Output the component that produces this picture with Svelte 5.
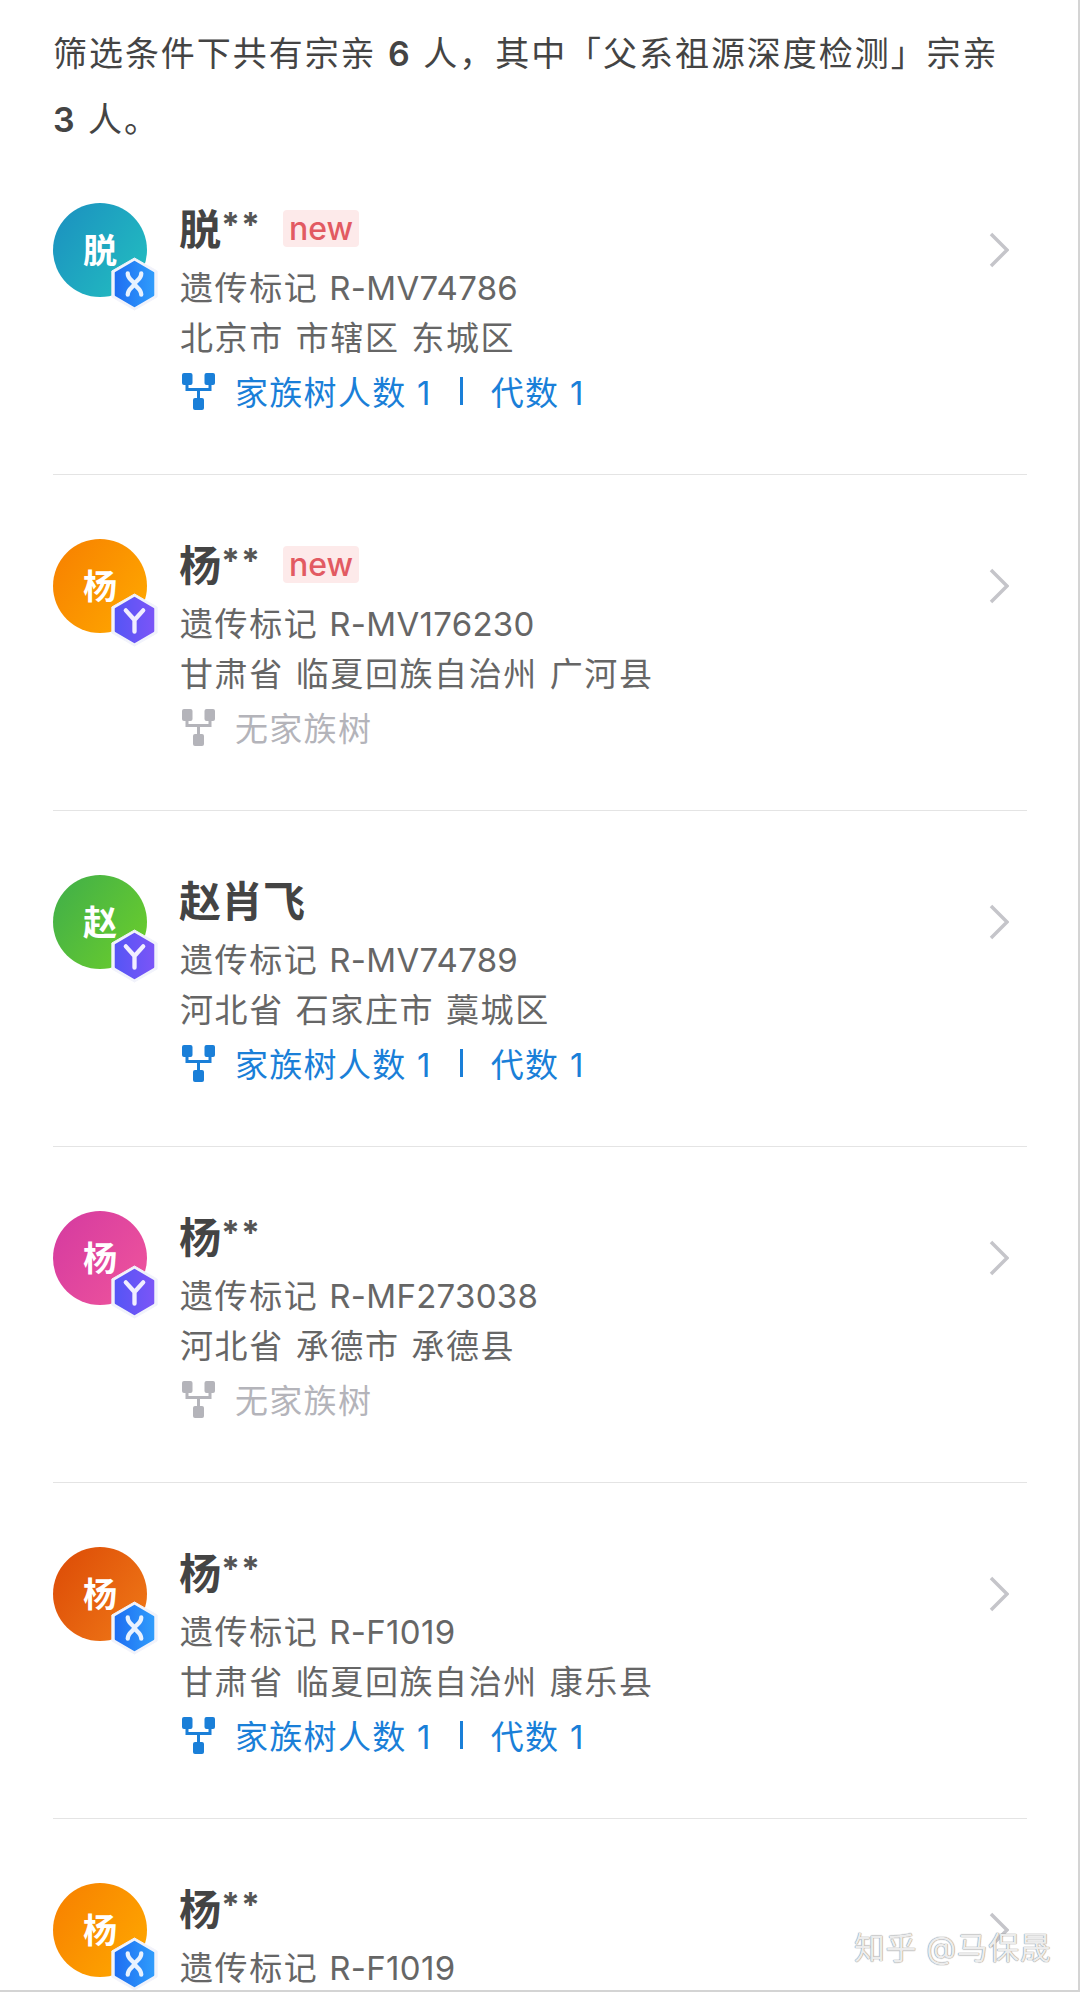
<script lang="ts">
  const rows = [
    { name: '脱', stars: true, isNew: true, tone: 'teal', hap: 'x', mark: 'R-MV74786', place: '北京市 市辖区 东城区', tree: true },
    { name: '杨', stars: true, isNew: true, tone: 'orange', hap: 'y', mark: 'R-MV176230', place: '甘肃省 临夏回族自治州 广河县', tree: false },
    { name: '赵肖飞', stars: false, isNew: false, tone: 'green', hap: 'y', mark: 'R-MV74789', place: '河北省 石家庄市 藁城区', tree: true },
    { name: '杨', stars: true, isNew: false, tone: 'pink', hap: 'y', mark: 'R-MF273038', place: '河北省 承德市 承德县', tree: false },
    { name: '杨', stars: true, isNew: false, tone: 'red', hap: 'x', mark: 'R-F1019', place: '甘肃省 临夏回族自治州 康乐县', tree: true },
    { name: '杨', stars: true, isNew: false, tone: 'orange', hap: 'x', mark: 'R-F1019', place: '', tree: null }
  ]
</script>

<main class="page">
  <svg class="defs" width="0" height="0" aria-hidden="true">
    <defs>
      <linearGradient id="hap-x" x1="0" y1="0" x2="1" y2="0">
        <stop offset="0" stop-color="#1f6ff2" />
        <stop offset="1" stop-color="#2f9bfb" />
      </linearGradient>
      <linearGradient id="hap-y" x1="0" y1="0" x2="1" y2="0">
        <stop offset="0" stop-color="#5655f5" />
        <stop offset="1" stop-color="#7a55f7" />
      </linearGradient>
    </defs>
  </svg>

  <p class="intro">筛选条件下共有宗亲 <b>6</b> 人，其中「父系祖源深度检测」宗亲<br /><b>3</b> 人。</p>

  <ul class="list">
    {#each rows as row}
      <li class="row">
        <div class="avatar {row.tone}">
          <span>{row.name[0]}</span>
          <svg class="hex" viewBox="0 0 50 56">
            <path d="M25 1 48.500 14.500v27L25 55 1.500 41.500v-27z" fill="#f1f3fb" stroke="#f1f3fb" stroke-linejoin="round" />
            <path d="M25 5 44.500 16.500v23L25 51 5.500 39.500v-23z" fill="url(#hap-{row.hap})" stroke="url(#hap-{row.hap})" stroke-width="2" stroke-linejoin="round" />
            {#if row.hap === 'x'}
              <path d="M18 17c0 6 6 8 7 11s7 5 7 11M32 17c0 6-6 8-7 11s-7 5-7 11" fill="none" stroke="#e8f2ff" stroke-width="4.500" stroke-linecap="round" />
            {:else}
              <path d="M16 18l9 10 9-10M25 28v12" fill="none" stroke="#f1eeff" stroke-width="4.500" stroke-linecap="round" stroke-linejoin="round" />
            {/if}
          </svg>
        </div>

        <div class="body">
          <div class="title">
            <span class="name">{row.name}</span>{#if row.stars}<span class="stars">**</span>{/if}
            {#if row.isNew}<span class="tag">new</span>{/if}
          </div>
          <div class="line">遗传标记 <span class="mark">{row.mark}</span></div>
          {#if row.place}<div class="line">{row.place}</div>{/if}
          {#if row.tree !== null}
            <div class="tree" class:none={!row.tree}>
              <svg class="tree-icon" viewBox="0 0 35 37">
                <path d="M6 8v8.500h23V8M17.500 16.500V28" fill="none" stroke="currentColor" stroke-width="3" />
                <rect x="1" y="0" width="10.500" height="12" rx="2" fill="currentColor" />
                <rect x="23.500" y="0" width="10.500" height="12" rx="2" fill="currentColor" />
                <rect x="12" y="25" width="11" height="12" rx="2" fill="currentColor" />
              </svg>
              {#if row.tree}
                <span>家族树人数 1</span><i></i><span>代数 1</span>
              {:else}
                <span>无家族树</span>
              {/if}
            </div>
          {/if}
        </div>

        <svg class="chevron" viewBox="0 0 20 36">
          <path d="M2 2l16 16L2 34" fill="none" stroke="#c5c5ca" stroke-width="3.500" />
        </svg>
      </li>
    {/each}
  </ul>

  <div class="watermark">知乎 @马保晟</div>
</main>

<style>
  :global(body) {
    margin: 0;
    background: #fff;
  }

  .page {
    position: relative;
    width: 1080px;
    height: 1992px;
    box-sizing: border-box;
    padding: 21px 53px 0 53px;
    overflow: hidden;
    background: #fff;
    border-right: 2px solid #d4d4d4;
    border-bottom: 2px solid #d4d4d4;
    font-family: Inter, 'Noto Sans CJK SC', sans-serif;
    color: #666;
  }

  .defs {
    position: absolute;
  }

  .intro {
    margin: 0;
    font-size: 34px;
    line-height: 66px;
    letter-spacing: 1.950px;
    color: #444;
    white-space: nowrap;
  }

  .intro b {
    font-weight: 600;
  }

  .list {
    margin: 0;
    padding: 0;
    list-style: none;
    width: 974px;
  }

  .row {
    display: flex;
    align-items: flex-start;
    box-sizing: border-box;
    height: 336px;
    padding-top: 64px;
    border-bottom: 1px solid #e4e4e4;
  }

  .row:first-child {
    height: 322px;
    padding-top: 50px;
  }

  .avatar {
    position: relative;
    flex: none;
    display: flex;
    align-items: center;
    justify-content: center;
    box-sizing: border-box;
    width: 94px;
    height: 94px;
    padding-bottom: 4px;
    margin-right: 33px;
    border-radius: 50%;
    color: #fff;
    font-size: 34px;
    font-weight: 700;
  }

  .avatar.teal { background: linear-gradient(125deg, #1b8fc0, #23c0c0); }
  .avatar.orange { background: linear-gradient(125deg, #f77f00, #ffaa00); }
  .avatar.green { background: linear-gradient(125deg, #3fae4a, #6ecf2a); }
  .avatar.pink { background: linear-gradient(125deg, #d43aa0, #f0559c); }
  .avatar.red { background: linear-gradient(125deg, #dc4a06, #f07a18); }

  .hex {
    position: absolute;
    left: 57px;
    top: 54px;
    width: 49px;
    height: 54px;
  }

  .body {
    flex: 1;
    min-width: 0;
  }

  .title {
    display: flex;
    align-items: flex-start;
    height: 60px;
    color: #444;
  }

  .name {
    font-size: 42px;
    font-weight: 700;
    line-height: 54px;
    margin-left: -1px;
  }

  .stars {
    font-size: 34px;
    font-weight: 700;
    line-height: 44px;
    letter-spacing: 1px;
    color: #555;
  }

  .tag {
    margin-left: 22px;
    margin-top: 7px;
    padding: 0 6px;
    height: 37px;
    line-height: 38px;
    border-radius: 4px;
    background: #fdeaea;
    color: #e25a62;
    font-size: 32px;
    font-weight: 500;
  }

  .line {
    font-size: 33px;
    line-height: 50px;
    letter-spacing: 1.600px;
    word-spacing: 1px;
    color: #666;
    white-space: nowrap;
  }

  .mark {
    margin-left: -1px;
    letter-spacing: 0.300px;
  }

  .tree {
    display: flex;
    align-items: center;
    height: 56px;
    font-size: 33px;
    letter-spacing: 1.300px;
    color: #1a7fd8;
  }

  .tree.none {
    color: #b4b4ba;
  }

  .tree-icon {
    width: 35px;
    height: 37px;
    margin-left: 1px;
    margin-right: 19px;
  }

  .tree i {
    width: 3px;
    height: 28px;
    margin: 0 28px 0 28px;
    background: currentColor;
  }

  .chevron {
    flex: none;
    width: 20px;
    height: 36px;
    margin-top: 29px;
    margin-right: 18px;
  }

  .watermark {
    position: absolute;
    left: 854px;
    top: 1928px;
    font-size: 31px;
    line-height: 40px;
    letter-spacing: 0.500px;
    color: rgba(255, 255, 255, 0.85);
    text-shadow: 0 0 1px #888, 0 0 1px #888;
    white-space: nowrap;
  }
</style>
